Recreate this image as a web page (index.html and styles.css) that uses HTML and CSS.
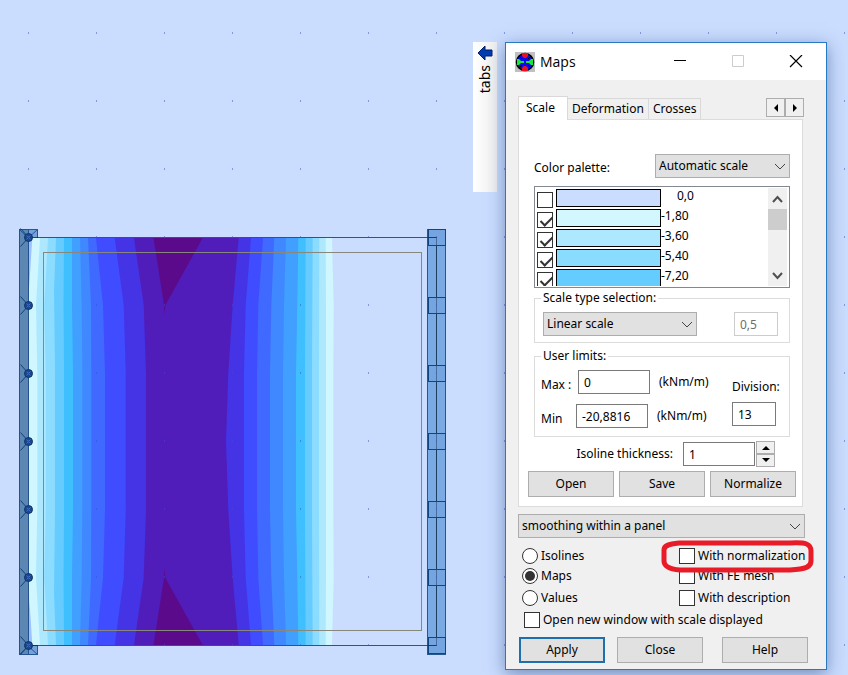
FILE: index.html
```html
<!DOCTYPE html>
<html lang="en">
<head>
<meta charset="utf-8">
<title>Maps</title>
<link rel="stylesheet" href="styles.css">
</head>
<body>
<main class="workspace">
  <svg class="scene" aria-label="Panel map view" role="img">
    <defs>
      <pattern id="grid" x="28" y="32" width="68" height="68" patternUnits="userSpaceOnUse">
        <rect width="1" height="2" fill="#3c50c8" fill-opacity=".5"/>
      </pattern>
      <g id="pin">
        <path d="M-8-9L0 0L-8 9" fill="none" stroke="#123f78"/>
        <circle r="4" fill="#1a4890" stroke="#0c3468"/>
        <path d="M-2-2L2 2M-2 2L2-2" stroke="#3a72bc"/>
      </g>
      <rect id="block" x="-8" y="-8" width="17" height="16" fill="#70a0dc" fill-opacity=".5" stroke="#124480"/>
    </defs>
    <rect x="19.500" y="229.500" width="18" height="9" fill="#75a2dd" stroke="#245894"/>
    <rect x="19.500" y="645.500" width="18" height="9" fill="#75a2dd" stroke="#245894"/>
    <path d="M29 238H34L29 290V600L34 645H29Z" fill="#9cc2ff"/>
    <path fill="#d0f6ff" d="M32.300 238L29 290V593L32.300 645H332L333.700 578L333.300 510V373L333.700 305L332 238Z"/>
    <path fill="#aee8ff" d="M40 238L36 305L37.300 373V510L36 578L40 645H325.700L326 578V305L325.700 238Z"/>
    <path fill="#8cdcff" d="M48 238L44.300 305L45.700 373V510L44.300 578L48 645H319.300L319 510V373L319.300 238Z"/>
    <path fill="#66ccff" d="M56 238L54 290L55 373V510L54 593L56 645H312.700L312 510V373L312.700 238Z"/>
    <path fill="#40bfff" d="M64 238L63.500 305L64 373V510L63.500 578L64 645H305.700L305 510V373L305.700 238Z"/>
    <path fill="#409fff" d="M72 238V305L73 373V510L72 578V645H298.300L297.300 578L296 510V373L297.300 305L298.300 238Z"/>
    <path fill="#4088ff" d="M80 238L81.700 305L82.300 373V510L81.700 578L80 645H286L284 578L283 510V373L284 305L286 238Z"/>
    <path fill="#4069ff" d="M88 238L91 305L91.300 373V510L91 578L88 645H274.300L271.300 578L270 510V373L271.300 305L274.300 238Z"/>
    <path fill="#404cff" d="M96 238L103 305L105 373V510L103 578L96 645H263L258.300 578L257 510V373L258.300 305L263 238Z"/>
    <path fill="#4434e6" d="M114.700 238L123.700 305L125.700 373V510L123.700 578L114.700 645H251L245.700 578L244 510V373L245.700 305L251 238Z"/>
    <path fill="#501dba" d="M134 238L143.700 305L146 373V510L143.700 578L134 645H238.700L232.700 578L228.300 510L226 441L228.300 373L232.700 305L238.700 238Z"/>
    <path fill="#5c0a8c" d="M153.500 238H202.700L165.500 305L164.500 315L164 305ZM153.500 645H202.700L165.500 578L164.500 568L164 578Z"/>
    <rect x="19.500" y="229.500" width="9" height="425" fill="#5d87b3" stroke="#245290"/>
    <path d="M20 230L28 238L37 230M20 654L28 646L37 654" fill="none" stroke="#245894"/>
    <path d="M28 237.500H437M28 645.500H437" stroke="#10203c" stroke-opacity=".75"/>
    <rect x="43.500" y="252.500" width="378" height="378" fill="none" stroke="#87877b"/>
    <rect x="427.500" y="229.500" width="18" height="425" fill="#7aaae4" stroke="#245890"/>
    <path d="M436.500 237V646" stroke="#1c3c60"/>
    <use href="#pin" x="28.500" y="237.500"/><use href="#pin" x="28.500" y="305.500"/>
    <use href="#pin" x="28.500" y="373.500"/><use href="#pin" x="28.500" y="441.500"/>
    <use href="#pin" x="28.500" y="509.500"/><use href="#pin" x="28.500" y="577.500"/>
    <use href="#pin" x="28.500" y="645.500"/>
    <use href="#block" x="436.500" y="237.500"/><use href="#block" x="436.500" y="305.500"/>
    <use href="#block" x="436.500" y="373.500"/><use href="#block" x="436.500" y="441.500"/>
    <use href="#block" x="436.500" y="509.500"/><use href="#block" x="436.500" y="577.500"/>
    <use href="#block" x="436.500" y="645.500"/>
    <path d="M427 237.500H437M427 645.500H437" stroke="#1c3c60"/>
    <rect width="100%" height="100%" fill="url(#grid)"/>
  </svg>

  <button class="side-tab" type="button">
    <svg width="16" height="16" viewBox="0 0 16 16"><path d="M1 8L8 1V5H15V11H8V15Z" fill="#003cb0" stroke="#001f6c"/></svg>
    <span>tabs</span>
  </button>

  <section class="dialog" aria-labelledby="title">
    <header class="titlebar">
      <svg width="20" height="20" viewBox="0 0 20 20">
        <path fill="#c0c0c0" d="M0 0H20V20H0Z"/>
        <circle cx="10" cy="10" r="8.500" fill="#0808f0" stroke="#000" stroke-width="1.500"/>
        <path fill="#e81020" d="M7 1H13V4L11 6H9L7 4ZM7 19H13V16L11 14H9L7 16Z"/>
        <path fill="#18e838" d="M2 7H4L6 9H9V11H6L4 13H2ZM18 7H16L14 9H11V11H14L16 13H18Z"/>
        <path d="M4 4L7 7M16 4L13 7M4 16L7 13M16 16L13 13" stroke="#000"/>
      </svg>
      <h1 id="title">Maps</h1>
      <div class="window-buttons">
        <button type="button" aria-label="Minimize"><svg width="14" height="14"><path d="M1 5.500H13" stroke="#000"/></svg></button>
        <button type="button" aria-label="Maximize" disabled><svg width="14" height="14"><path d="M1.500 .5H12.500V11.500H1.500Z" fill="none" stroke="#ccc"/></svg></button>
        <button type="button" aria-label="Close window"><svg width="14" height="14"><path d="M1 0L13 12M13 0L1 12" stroke="#000" stroke-width="1.200"/></svg></button>
      </div>
    </header>

    <form class="content">
      <div class="tabs">
        <button class="tab active" type="button">Scale</button>
        <button class="tab" type="button">Deformation</button>
        <button class="tab" type="button">Crosses</button>
        <div class="tab-scroll">
          <button type="button" aria-label="Previous tab"><svg width="6" height="8"><path d="M5 0V8L1 4Z"/></svg></button>
          <button type="button" aria-label="Next tab"><svg width="6" height="8"><path d="M1 0V8L5 4Z"/></svg></button>
        </div>
      </div>

      <div class="panel">
        <div class="palette-row">
          <label for="palette">Color palette:</label>
          <div class="combo palette">
            <select id="palette"><option>Automatic scale</option></select>
            <svg width="12" height="8"><path d="M1 1L6 6L11 1" fill="none" stroke="#444"/></svg>
          </div>
        </div>

        <div class="color-list">
          <ul>
            <li><input type="checkbox" id="c0"><span class="swatch s0"></span><label class="zero" for="c0">0,0</label></li>
            <li><input type="checkbox" id="c1" checked><span class="swatch s1"></span><label for="c1">-1,80</label></li>
            <li><input type="checkbox" id="c2" checked><span class="swatch s2"></span><label for="c2">-3,60</label></li>
            <li><input type="checkbox" id="c3" checked><span class="swatch s3"></span><label for="c3">-5,40</label></li>
            <li><input type="checkbox" id="c4" checked><span class="swatch s4"></span><label for="c4">-7,20</label></li>
          </ul>
          <div class="scrollbar">
            <button type="button" aria-label="Scroll up"><svg width="11" height="8"><path d="M1 7L5.500 2L10 7" fill="none" stroke="#505050" stroke-width="2"/></svg></button>
            <div class="thumb"></div>
            <button type="button" aria-label="Scroll down"><svg width="11" height="8"><path d="M1 1L5.500 6L10 1" fill="none" stroke="#505050" stroke-width="2"/></svg></button>
          </div>
        </div>

        <fieldset class="scale-type">
          <legend>Scale type selection:</legend>
          <div class="split">
            <div class="combo linear">
              <select aria-label="Scale type"><option>Linear scale</option></select>
              <svg width="12" height="8"><path d="M1 1L6 6L11 1" fill="none" stroke="#444"/></svg>
            </div>
            <input class="field short" type="text" value="0,5" aria-label="Scale factor" disabled>
          </div>
        </fieldset>

        <fieldset class="limits">
          <legend>User limits:</legend>
          <div class="split">
            <div class="limit-rows">
              <div class="limit-row max"><label for="max">Max :</label><input class="field" id="max" type="text" value="0"><span>(kNm/m)</span></div>
              <div class="limit-row"><label for="min">Min</label><input class="field" id="min" type="text" value="-20,8816"><span>(kNm/m)</span></div>
            </div>
            <div class="division"><label for="division">Division:</label><input class="field short" id="division" type="text" value="13"></div>
          </div>
        </fieldset>

        <div class="thickness">
          <label for="thickness">Isoline thickness:</label>
          <input class="field" id="thickness" type="text" value="1">
          <div class="spinner">
            <button type="button" aria-label="Increase"><svg width="8" height="5"><path d="M0 5H8L4 1Z"/></svg></button>
            <button type="button" aria-label="Decrease"><svg width="8" height="5"><path d="M0 0H8L4 4Z"/></svg></button>
          </div>
        </div>

        <div class="panel-buttons">
          <button class="push" type="button">Open</button>
          <button class="push" type="button">Save</button>
          <button class="push" type="button">Normalize</button>
        </div>
      </div>

      <div class="combo smoothing">
        <select aria-label="Smoothing"><option>smoothing within a panel</option></select>
        <svg width="12" height="8"><path d="M1 1L6 6L11 1" fill="none" stroke="#444"/></svg>
      </div>

      <div class="options">
        <label><input type="radio" name="view">Isolines</label>
        <label class="marked"><input type="checkbox">With normalization
          <svg class="ring" viewBox="0 0 154 34"><path d="M19 4H130C146 3 151 5 151 12V22C151 28 146 30 130 31H20C8 30 4 27 4 22V11C4 7 8 5 19 4Z" fill="none" stroke="#e81c28" stroke-width="5"/></svg>
        </label>
        <label><input type="radio" name="view" checked>Maps</label>
        <label><input type="checkbox">With FE mesh</label>
        <label><input type="radio" name="view">Values</label>
        <label><input type="checkbox">With description</label>
        <label class="wide"><input type="checkbox">Open new window with scale displayed</label>
      </div>

      <div class="actions">
        <button class="push default" type="submit">Apply</button>
        <button class="push" type="button">Close</button>
        <button class="push help" type="button">Help</button>
      </div>
    </form>
  </section>
</main>
</body>
</html>
```
FILE: styles.css
```css
* { box-sizing: border-box; }

body {
  margin: 0;
  background: #caddff;
  color: #000;
  font: 12px/16px "Noto Sans", "DejaVu Sans", sans-serif;
}

button, input, select { font: inherit; color: inherit; }
button, input { margin: 0; padding: 0; }
svg { display: block; flex: none; }

.workspace { position: relative; min-height: 100vh; overflow: hidden; }
.scene { position: absolute; inset: 0; width: 100%; height: 100%; }

/* Collapsed side panel */
.side-tab {
  position: absolute;
  left: 473px;
  top: 42px;
  width: 24px;
  height: 150px;
  display: flex;
  flex-direction: column;
  align-items: center;
  gap: 4px;
  padding-top: 3px;
  border: 0;
  background: linear-gradient(90deg, #fff, #efefef);
  font-size: 14px;
}
.side-tab span { writing-mode: vertical-rl; transform: rotate(180deg); }

/* Dialog window */
.dialog {
  position: absolute;
  left: 505px;
  top: 42px;
  width: 322px;
  border: 1px solid #2779c2;
  background: #f0f0f0;
  box-shadow: 0 4px 16px rgba(30, 60, 120, .5);
}
.titlebar {
  display: flex;
  align-items: center;
  height: 37px;
  padding-left: 9px;
  background: #fff;
}
.titlebar h1 {
  margin: 0 auto 0 5px;
  font: 14px/20px "Open Sans", "Noto Sans", sans-serif;
}
.window-buttons { display: flex; padding-right: 1px; }
.window-buttons button {
  display: grid;
  place-items: center;
  width: 58px;
  height: 36px;
  border: 0;
  background: none;
}

.content { padding: 16px 18px 6px 12px; }

.tabs { display: flex; align-items: flex-end; height: 23px; margin-right: 4px; }
.tab {
  height: 21px;
  padding: 0 4px;
  border: 1px solid #d9d9d9;
  border-left: 0;
  border-bottom: 0;
  background: #f0f0f0;
}
.tab.active {
  position: relative;
  height: 24px;
  margin-bottom: -1px;
  padding: 0 12px 2px 7px;
  border-left: 1px solid #d9d9d9;
  background: #fff;
}
.tab-scroll { display: flex; margin-left: auto; align-self: flex-start; padding-top: 2px; }
.tab-scroll button {
  display: grid;
  place-items: center;
  width: 19px;
  height: 19px;
  border: 1px solid #adadad;
  background: #f0f0f0;
}

.panel {
  margin-right: 5px;
  padding: 34px 12px 9px 15px;
  border: 1px solid #dcdcdc;
  background: #fff;
}
.palette-row { display: flex; align-items: center; justify-content: space-between; height: 24px; }
.palette-row label { padding-top: 4px; }

.combo { position: relative; height: 24px; }
.combo select {
  width: 100%;
  height: 100%;
  padding: 0 3px;
  border: 1px solid #adadad;
  border-radius: 0;
  appearance: none;
  background: #e1e1e1;
}
.combo svg { position: absolute; right: 4px; top: 9px; pointer-events: none; }
.palette { width: 135px; }
.linear { width: 154px; }
.smoothing { margin: 7px 3px 0 0; }

.color-list {
  display: flex;
  justify-content: space-between;
  height: 102px;
  margin-top: 8px;
  padding: 1px 2px 1px 2px;
  border: 1px solid #828790;
}
.color-list ul { flex: 1; margin: 0; padding: 0; overflow: hidden; list-style: none; }
.color-list li { display: flex; align-items: center; height: 20px; }
.color-list input { margin-top: 3px; }
.color-list label { align-self: flex-start; }
.color-list .zero { padding-left: 16px; }
.swatch { width: 105px; height: 18px; margin-left: 3px; border: 1px solid #000; }
.s0 { background: #caddff; }
.s1 { background: #d2f7ff; }
.s2 { background: #aee8ff; }
.s3 { background: #8adcff; }
.s4 { background: #64ccff; }
.scrollbar { display: flex; flex-direction: column; width: 19px; background: #f0f0f0; }
.scrollbar button { display: grid; place-items: center; height: 21px; border: 0; background: none; }
.thumb { height: 21px; margin-bottom: auto; background: #cdcdcd; }

fieldset { min-width: 0; margin: 0; border: 1px solid #dcdcdc; }
legend { height: 16px; padding: 0 2px; }
.scale-type { margin-top: 2px; padding: 6px 11px 6px 8px; }
.limits { margin-top: 5px; padding: 6px 8px 8px 6px; }
.scale-type legend { margin-left: -2px; }
.split { display: flex; justify-content: space-between; }

.field {
  width: 72px;
  height: 24px;
  padding: 0 5px;
  border: 1px solid #7a7a7a;
  border-radius: 0;
  background: #fff;
}
.field.short { width: 44px; }
.field:disabled { border-color: #ccc; color: #6d6d6d; }

.limit-rows { display: grid; gap: 10px; }
.limit-row { display: grid; grid-template-columns: 35px 72px auto; align-items: center; }
.limit-row.max { grid-template-columns: 37px 72px auto; }
.limit-row label { padding-top: 6px; }
.limit-row span { padding-left: 9px; }
.division { display: flex; flex-direction: column; gap: 7px; width: 49px; padding-top: 9px; white-space: nowrap; }

.thickness { display: flex; align-items: center; justify-content: flex-end; height: 26px; margin: 4px 15px 4px 0; }
.thickness label { margin-right: 10px; }
.spinner { display: grid; margin-left: 1px; }
.spinner button {
  display: grid;
  place-items: center;
  width: 19px;
  height: 13px;
  border: 1px solid #adadad;
  background: #f0f0f0;
}

.push { width: 86px; height: 26px; border: 1px solid #adadad; background: #e1e1e1; }
.push.default { border: 2px solid #1f6fae; }
.panel-buttons { display: flex; justify-content: space-between; margin: 0 -6px; }

.options {
  display: grid;
  grid-template-columns: 157px 1fr;
  grid-template-rows: 20px 20px 24px 20px;
  padding: 8px 0 7px 4px;
}
.options label { display: flex; align-items: center; gap: 3px; white-space: nowrap; }
.options .wide { grid-column: 1 / -1; padding-left: 2px; }
.marked { position: relative; }
.ring { position: absolute; left: -19px; top: -7px; width: 154px; height: 34px; pointer-events: none; z-index: 1; }

input[type="checkbox"], input[type="radio"] {
  flex: none;
  position: relative;
  width: 16px;
  height: 16px;
  border: 1px solid #333;
  appearance: none;
  background: #fff;
}
input[type="radio"] { border-radius: 50%; }
input[type="radio"]:checked::after {
  content: "";
  position: absolute;
  inset: 2px;
  border-radius: 50%;
  background: #333;
}
input[type="checkbox"]:checked::after {
  content: "";
  position: absolute;
  left: 5px;
  top: 1px;
  width: 5px;
  height: 10px;
  border: solid #333;
  border-width: 0 2px 2px 0;
  transform: rotate(45deg);
}

.actions { display: flex; gap: 12px; padding-left: 1px; }
.actions .help { margin-left: auto; }
```
